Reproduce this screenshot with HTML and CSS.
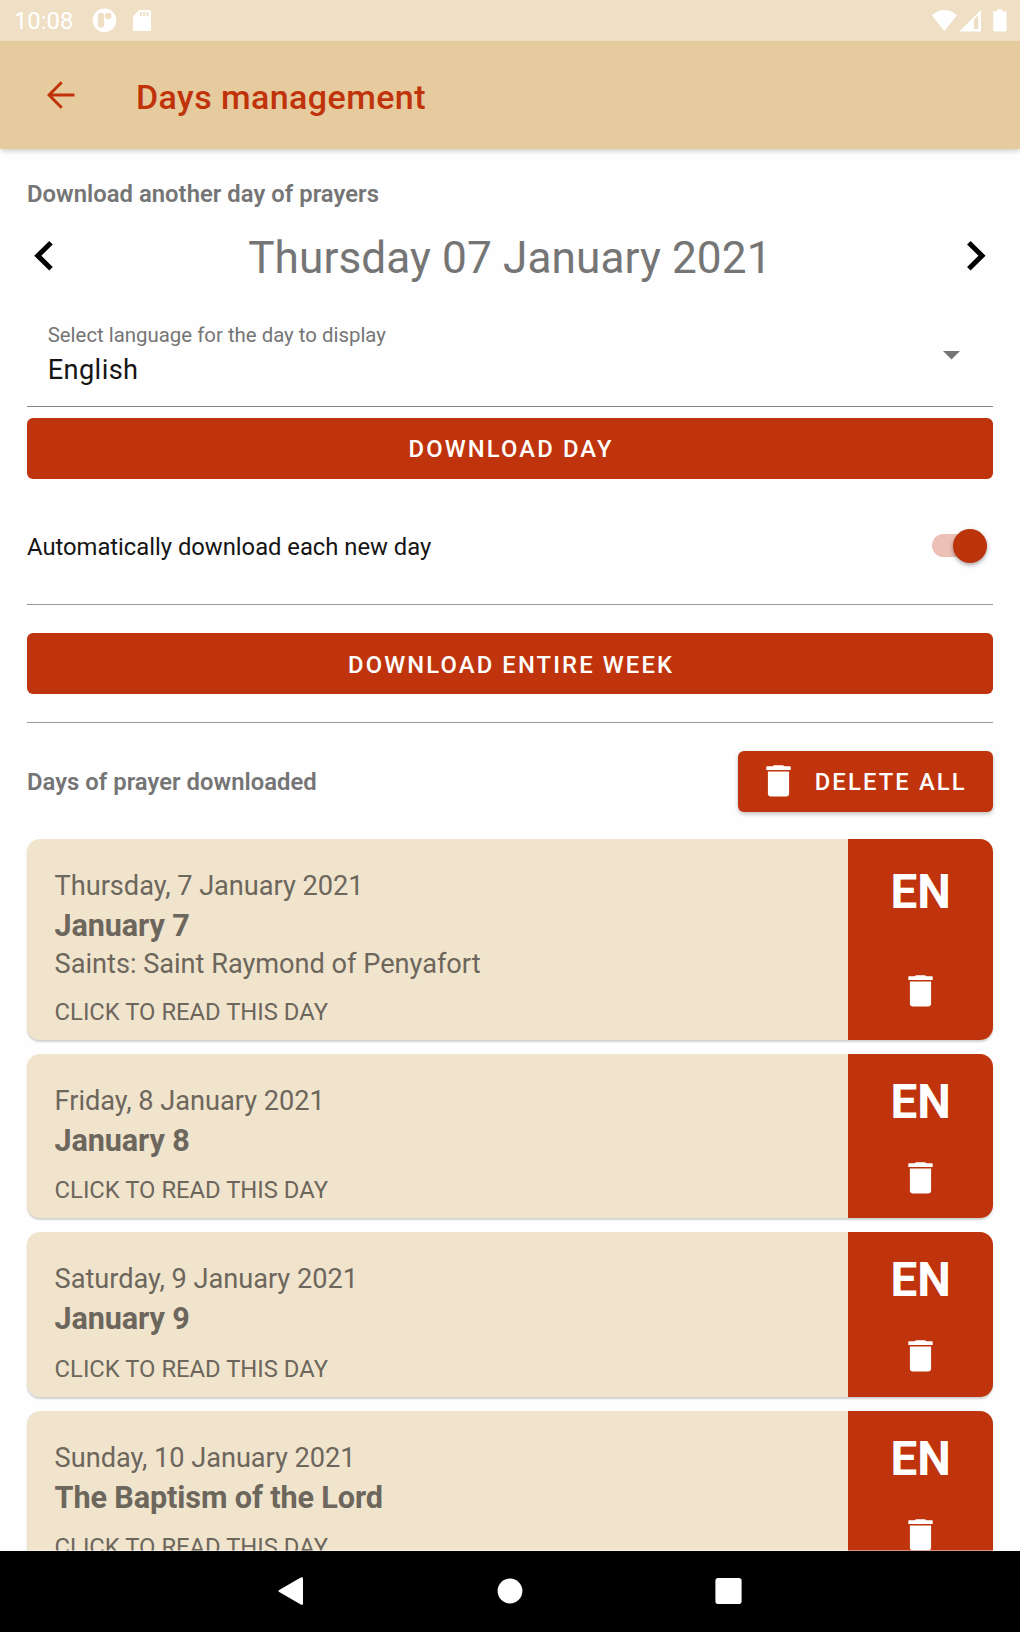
FILE: index.html
```html
<!DOCTYPE html>
<html lang="en">
<head>
<meta charset="utf-8">
<title>Days management</title>
<link rel="stylesheet" href="styles.css">
</head>
<body>
<svg class="symbols" width="0" height="0">
  <symbol id="trash" viewBox="0 0 25 32">
    <path d="M0.3 5V2Q0.3 1.3 1 1.3H6.5L8 0.2H17L18.5 1.3H24Q24.7 1.3 24.7 2V5Z"/>
    <path d="M1.9 6.5H23.1V28.3Q23.1 31.5 19.9 31.5H5.1Q1.9 31.5 1.9 28.3Z"/>
  </symbol>
</svg>
<div class="screen">
  <header class="status">
    <span class="clock">10:08</span>
    <svg class="status-left" width="80" height="41" viewBox="80 0 80 41">
      <circle cx="104.5" cy="20.3" r="11.8" fill="#fff"/>
      <rect x="97.8" y="12.8" width="6.4" height="15" rx="3" fill="#efdfc4"/>
      <circle cx="108.2" cy="16" r="3.3" fill="#efdfc4"/>
      <path fill="#fff" d="M139.2 10H149.2Q151 10 151 11.8V29.2Q151 31 149.2 31H134.8Q133 31 133 29.2V16.2Z"/>
      <path fill="#efdfc4" d="M140 12h2v4h-2zM143.2 12h2v4h-2zM146.4 12h2v4h-2z"/>
    </svg>
    <svg class="status-right" width="90" height="41" viewBox="930 0 90 41" fill="#fff">
      <path d="M944.3 31 931.7 15.3Q944.3 4.8 957 15.3Z"/>
      <path fill-rule="evenodd" d="M959.3 31.5 981 10V31.5ZM973.8 19.8V29H978.3V15.3Z"/>
      <path d="M993.2 12.2Q993.2 11.2 994.2 11.2H997.3V9.3H1002.3V11.2H1005.4Q1006.5 11.2 1006.5 12.2V30Q1006.5 31.4 1005.3 31.4H994.3Q993.2 31.4 993.2 30Z"/>
    </svg>
  </header>
  <div class="toolbar">
    <svg class="back" width="28" height="28" viewBox="0 0 28 28" fill="none" stroke="#c0330a" stroke-width="3"><path d="M27.5 14H2.5M14.7 1.3 2 14 14.7 26.7"/></svg>
    <h1>Days management</h1>
  </div>
  <main>
    <h2>Download another day of prayers</h2>
    <div class="date-row">
      <svg width="34" height="52" fill="none" stroke="#000" stroke-width="5"><path d="M24 10.7 10.8 23.7 24 36.7"/></svg>
      <span class="date">Thursday 07 January 2021</span>
      <svg width="34" height="52" fill="none" stroke="#000" stroke-width="5"><path d="M9.8 10.7 23 23.7 9.8 36.7"/></svg>
    </div>
    <div class="select">
      <div>
        <div class="select-label">Select language for the day to display</div>
        <div class="select-value">English</div>
      </div>
      <svg width="17" height="9" fill="#757575"><path d="M0 0H17L8.5 8.5Z"/></svg>
    </div>
    <div class="button">DOWNLOAD DAY</div>
    <div class="switch-row">
      <span>Automatically download each new day</span>
      <div class="switch"><div class="thumb"></div></div>
    </div>
    <div class="button">DOWNLOAD ENTIRE WEEK</div>
    <div class="list-head">
      <h2>Days of prayer downloaded</h2>
      <div class="button delete"><svg class="trash"><use href="#trash"/></svg><span>DELETE ALL</span></div>
    </div>
    <div class="cards">
      <article class="card tall">
        <div class="info"><div class="day">Thursday, 7 January 2021</div><div class="feast">January 7</div><div class="saint">Saints: Saint Raymond of Penyafort</div><div class="read">CLICK TO READ THIS DAY</div></div>
        <div class="side"><b>EN</b><svg class="trash"><use href="#trash"/></svg></div>
      </article>
      <article class="card">
        <div class="info"><div class="day">Friday, 8 January 2021</div><div class="feast">January 8</div><div class="read">CLICK TO READ THIS DAY</div></div>
        <div class="side"><b>EN</b><svg class="trash"><use href="#trash"/></svg></div>
      </article>
      <article class="card">
        <div class="info"><div class="day">Saturday, 9 January 2021</div><div class="feast">January 9</div><div class="read">CLICK TO READ THIS DAY</div></div>
        <div class="side"><b>EN</b><svg class="trash"><use href="#trash"/></svg></div>
      </article>
      <article class="card">
        <div class="info"><div class="day">Sunday, 10 January 2021</div><div class="feast">The Baptism of the Lord</div><div class="read">CLICK TO READ THIS DAY</div></div>
        <div class="side"><b>EN</b><svg class="trash"><use href="#trash"/></svg></div>
      </article>
    </div>
  </main>
  <nav class="navbar">
    <svg width="26" height="28" viewBox="0 0 26 28" fill="#fff"><path d="M1.2 12.9 22.8 .5Q25 -.5 25 1.5V26.5Q25 28.5 22.8 27.5L1.2 15.1Q-.4 14 1.2 12.9Z"/></svg>
    <svg width="26" height="26" fill="#fff"><circle cx="13" cy="13" r="12.4"/></svg>
    <svg width="27" height="26" fill="#fff"><rect x=".4" width="26.2" height="26" rx="2.8"/></svg>
  </nav>
</div>
</body>
</html>
```
FILE: styles.css
```css
* { box-sizing: border-box; }
body { margin: 0; background: #fefefe; font-family: Roboto, sans-serif; }
h1, h2 { margin: 0; }
svg { display: block; flex: none; }
.symbols { position: absolute; }
.screen { width: 1020px; height: 1632px; display: flex; flex-direction: column; overflow: hidden; }

.status { flex: none; height: 41px; display: flex; background: #efdfc4; color: #fff; }
.clock { width: 80px; padding-left: 14px; font-size: 23.8px; line-height: 43px; }
.status-right { margin-left: auto; }

.toolbar { flex: none; height: 108px; display: flex; align-items: center; gap: 61.5px; padding-left: 46.5px; background: #e5cb9e; box-shadow: 0 3px 5px -1px rgba(0, 0, 0, .2); }
.back { margin-top: -1px; }
h1 { font-size: 34px; line-height: 40px; font-weight: 500; color: #c0330a; letter-spacing: .42px; margin-top: 3px; }

main { flex: 1; min-height: 0; overflow: hidden; padding: 31px 27.3px 0 27px; display: flex; flex-direction: column; clip-path: inset(10px 0 0 0); }
h2 { flex: none; font-size: 23.8px; line-height: 28px; font-weight: 600; color: #757575; letter-spacing: .04px; }
.date-row { flex: none; height: 52px; margin-top: 24px; display: flex; justify-content: space-between; }
.date { font-size: 44.2px; line-height: 52px; color: #757575; letter-spacing: .07px; }
.select { flex: none; height: 89px; margin-top: 34px; padding: 5px 32.5px 0 20.7px; border-bottom: 1px solid #868686; display: flex; justify-content: space-between; }
.select svg { margin-top: 28px; }
.select-label { font-size: 20.4px; line-height: 24px; color: #757575; }
.select-value { margin-top: 7px; font-size: 27.2px; line-height: 32px; letter-spacing: .4px; color: #151515; }
.button { flex: none; height: 61px; margin-top: 10.5px; border-radius: 6px; background: #bf340c; color: #fff; display: flex; align-items: center; justify-content: center; font-size: 23.8px; font-weight: 500; letter-spacing: 2.12px; padding: 2px 0 0 2.5px; }
.switch-row { flex: none; height: 126.5px; padding: 12px 6px 0 0; border-bottom: 1px solid #999; display: flex; align-items: center; justify-content: space-between; font-size: 23.8px; color: #151515; letter-spacing: -.02px; }
.switch { width: 55px; height: 23px; border-radius: 12px; background: #edc0b5; display: flex; align-items: center; justify-content: flex-end; margin-top: -3px; }
.thumb { width: 34px; height: 34px; flex: none; border-radius: 50%; background: #bb340c; box-shadow: 0 2px 4px rgba(0, 0, 0, .35); }
.switch-row + .button { margin-top: 28px; }
.list-head { flex: none; height: 90px; margin-top: 27.5px; border-top: 1px solid #999; display: flex; justify-content: space-between; align-items: flex-end; }
.list-head h2 { margin-bottom: 16px; }
.delete { width: 255px; margin: 0; justify-content: flex-start; padding-left: 28px; gap: 24px; box-shadow: 0 2px 4px rgba(0, 0, 0, .25); }
.delete .trash { margin-top: -2px; }
.trash { width: 25px; height: 32px; fill: #fff; }

.cards { display: flex; flex-direction: column; gap: 14px; margin-top: 27px; }
.card { flex: none; height: 164.5px; display: flex; border-radius: 13px; overflow: hidden; background: #f0e4cd; color: #6d665c; box-shadow: 0 2px 2px rgba(0, 0, 0, .18); }
.tall { height: 201px; }
.info { flex: 1; padding: 31px 0 0 27.6px; }
.day, .saint { font-size: 27.2px; line-height: 32px; letter-spacing: -.03px; }
.feast { font-size: 30.6px; line-height: 36px; font-weight: 700; margin-top: 6px; letter-spacing: -.12px; }
.saint { margin-top: 4px; }
.read { font-size: 23.8px; line-height: 28px; margin-top: 17.5px; }
.saint + .read { margin-top: 18px; }
.side { width: 144.3px; background: #bf340c; color: #fff; display: flex; flex-direction: column; align-items: center; padding-top: 20px; }
.side b { font-size: 47.6px; line-height: 56px; }
.side .trash { margin-top: 32px; }
.tall .side { padding-top: 25px; }
.tall .side .trash { margin-top: 55px; }

.navbar { flex: none; height: 81.5px; background: #000; display: flex; align-items: center; justify-content: center; gap: 192.5px; }
```
